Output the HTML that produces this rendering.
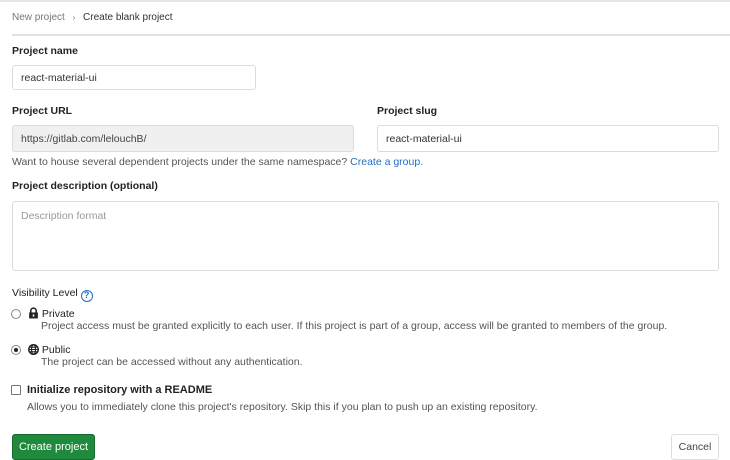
<!DOCTYPE html>
<html><head><meta charset="utf-8"><style>
*{box-sizing:border-box;margin:0;padding:0}
body{width:730px;height:459px;overflow:hidden;background:#fff;font-family:"Liberation Sans",sans-serif;font-size:10.5px;color:#333;position:relative}
.a{position:absolute;white-space:nowrap}
.lbl{font-weight:bold;color:#222}
.in{position:absolute;border:1px solid #dcdcdc;border-radius:3px;background:#fff;padding-left:8px;line-height:24px;color:#333}
.muted{color:#555}
</style></head><body>
<div class="a" style="left:0;top:0;width:730px;height:2px;background:#e5e5e5"></div>
<div class="a" style="left:12px;top:12px;font-size:10px;color:#777">New project <span style="margin:0 5px;font-size:8px">›</span> <span style="color:#333">Create blank project</span></div>
<div class="a" style="left:12px;top:34px;width:718px;height:2px;background:#e2e2e2"></div>
<div class="a lbl" style="left:12px;top:45px">Project name</div>
<div class="in" style="left:12px;top:65px;width:244px;height:25px">react-material-ui</div>
<div class="a lbl" style="left:12px;top:105px">Project URL</div>
<div class="in" style="left:12px;top:125px;width:342px;height:27px;line-height:26px;background:#f0f0f0;color:#444">https://gitlab.com/lelouchB/</div>
<div class="a lbl" style="left:377px;top:105px">Project slug</div>
<div class="in" style="left:377px;top:125px;width:342px;height:27px;line-height:26px">react-material-ui</div>
<div class="a muted" style="left:12px;top:156px">Want to house several dependent projects under the same namespace? <span style="color:#1f6fc5">Create a group.</span></div>
<div class="a lbl" style="left:12px;top:180px">Project description (optional)</div>
<div class="in" style="left:12px;top:201px;width:707px;height:70px;line-height:28px;color:#999">Description format</div>
<div class="a" style="left:12px;top:287px;color:#222">Visibility Level <span style="display:inline-block;width:12px;height:12px;border:1.5px solid #1f6fc5;border-radius:50%;color:#1f6fc5;font-size:9px;line-height:9px;text-align:center;font-weight:bold;vertical-align:-2px">?</span></div>
<div class="a" style="left:11px;top:309px;width:10px;height:10px;border:1px solid #888;border-radius:50%"></div>
<div class="a" style="left:28px;top:307px;color:#222"><svg width="11" height="12" viewBox="0 0 10 11" style="vertical-align:-2px"><path d="M2.5 5V3.5a2.5 2.5 0 0 1 5 0V5" fill="none" stroke="#222" stroke-width="1.4"/><rect x="1" y="5" width="8" height="5.5" fill="#222"/><rect x="4.3" y="6.8" width="1.4" height="2" fill="#fff"/></svg> Private</div>
<div class="a muted" style="left:41px;top:320px">Project access must be granted explicitly to each user. If this project is part of a group, access will be granted to members of the group.</div>
<div class="a" style="left:11px;top:345px;width:10px;height:10px;border:1px solid #888;border-radius:50%"><div style="position:absolute;left:2px;top:2px;width:4px;height:4px;border-radius:50%;background:#222"></div></div>
<div class="a" style="left:28px;top:344px;color:#222"><svg width="11" height="11" viewBox="0 0 10 10" style="vertical-align:-2px"><circle cx="5" cy="5" r="4.3" fill="none" stroke="#222" stroke-width="1.3"/><ellipse cx="5" cy="5" rx="1.8" ry="4.3" fill="none" stroke="#222" stroke-width="1.1"/><path d="M0.8 5H9.2M1.5 3h7M1.5 7h7" stroke="#222" stroke-width="0.9"/></svg> Public</div>
<div class="a muted" style="left:41px;top:356px">The project can be accessed without any authentication.</div>
<div class="a" style="left:11px;top:385px;width:10px;height:10px;border:1px solid #777;border-radius:1px"></div>
<div class="a lbl" style="left:27px;top:384px;font-size:11px">Initialize repository with a README</div>
<div class="a muted" style="left:27px;top:401px">Allows you to immediately clone this project's repository. Skip this if you plan to push up an existing repository.</div>
<div class="a" style="left:12px;top:434px;width:83px;height:26px;background:#1f8a3c;border:1px solid #16692d;border-radius:3px;color:#fff;font-size:11px;line-height:25px;text-align:center">Create project</div>
<div class="a" style="left:671px;top:434px;width:48px;height:26px;border:1px solid #ddd;border-radius:3px;color:#444;line-height:25px;text-align:center">Cancel</div>
</body></html>
